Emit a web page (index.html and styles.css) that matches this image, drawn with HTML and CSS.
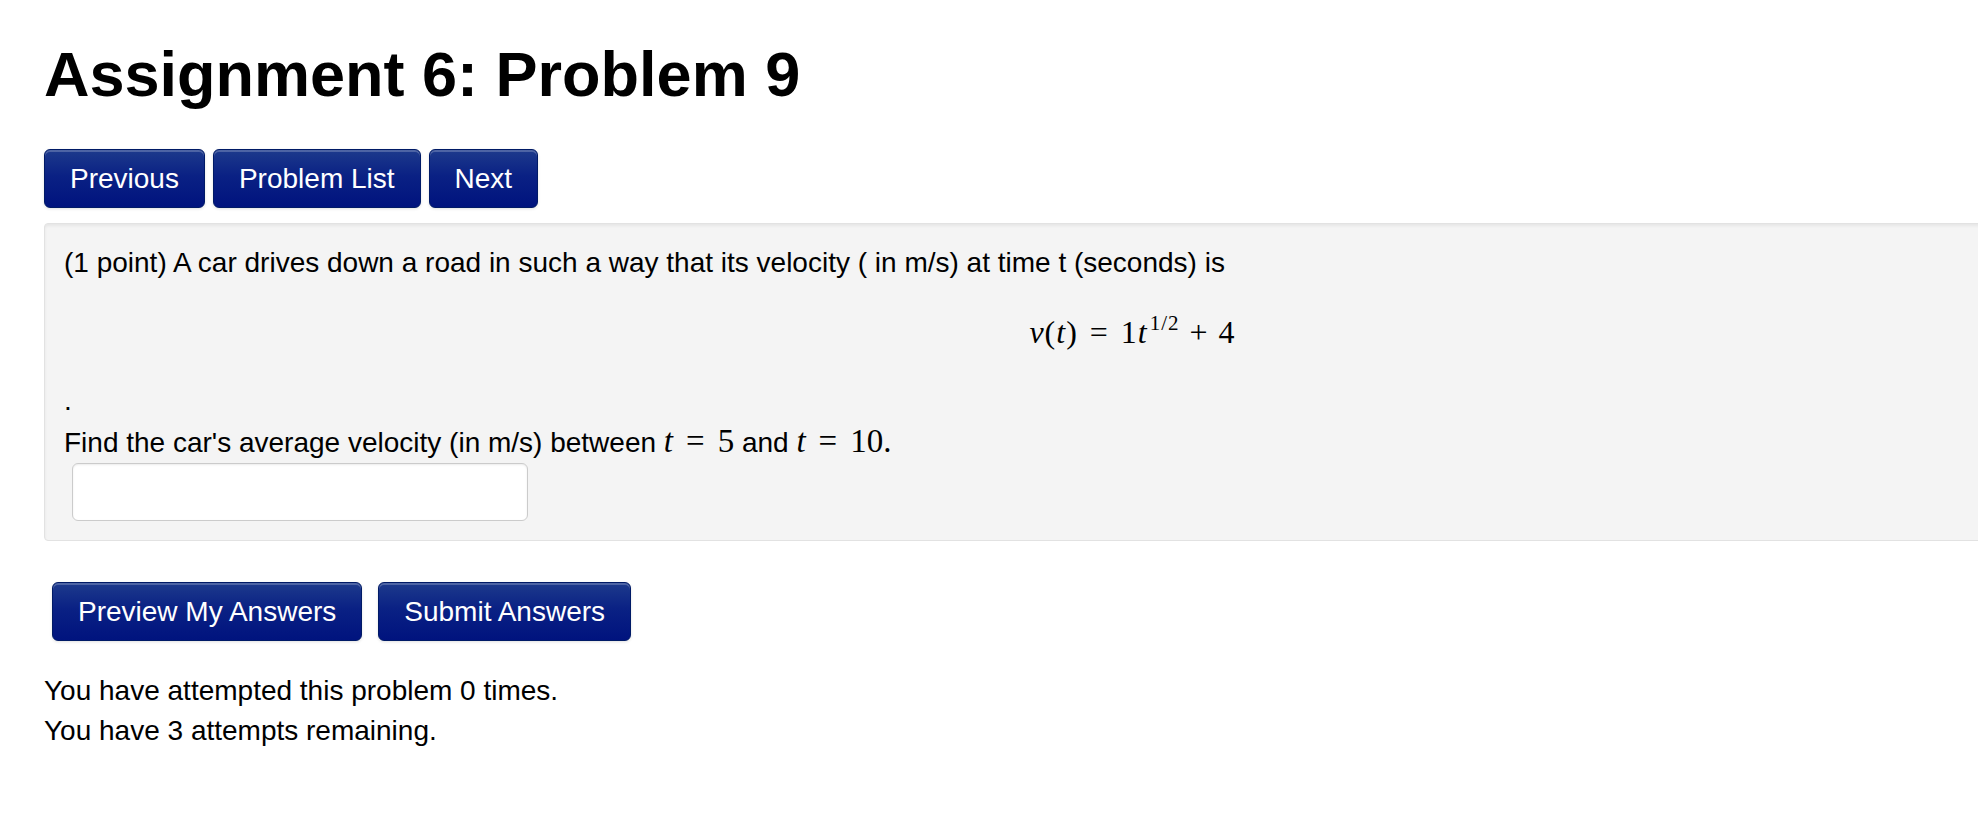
FILE: index.html
```html
<!DOCTYPE html>
<html lang="en">
<head>
<meta charset="utf-8">
<title>Assignment 6: Problem 9</title>
<link rel="stylesheet" href="styles.css">
</head>
<body>
<div class="page">
  <h1 class="title">Assignment 6: Problem 9</h1>
  <div class="nav">
    <button class="btn">Previous</button>
    <button class="btn">Problem List</button>
    <button class="btn">Next</button>
  </div>
  <div class="well">
    <p class="line">(1 point) A car drives down a road in such a way that its velocity ( in m/s) at time t (seconds) is</p>
    <div class="display"><span class="math"><i>v</i><span>(</span><i>t</i><span>)</span><span class="rel">=</span><span>1</span><i>t</i><sup class="sup">1/2</sup><span class="bin">+</span><span>4</span></span></div>
    <p class="line">.</p>
    <p class="line">Find the car's average velocity (in m/s) between <span class="imath"><i>t</i><span class="rel">=</span>5</span> and <span class="imath"><i>t</i><span class="rel">=</span>10.</span></p>
    <input class="answer" type="text" aria-label="answer">
  </div>
  <div class="actions">
    <button class="btn">Preview My Answers</button>
    <button class="btn">Submit Answers</button>
  </div>
  <p class="status">You have attempted this problem 0 times.<br>You have 3 attempts remaining.</p>
</div>
</body>
</html>
```
FILE: styles.css
```css
html, body {
  margin: 0;
  padding: 0;
  overflow: hidden;
  background: #fff;
}
body {
  font-family: "Liberation Sans", Arial, Helvetica, sans-serif;
  font-size: 28px;
  line-height: 40px;
  color: #000;
}
.page {
  padding-left: 44px;
}
.title {
  margin: 38px 0 39px;
  font-size: 63px;
  line-height: 72px;
  font-weight: bold;
}
.nav {
  display: flex;
  gap: 8px;
}
.btn {
  font-family: "Liberation Sans", Arial, Helvetica, sans-serif;
  font-size: 28px;
  line-height: 41px;
  color: #fff;
  padding: 8px 25px;
  border: 1px solid #001a66;
  border-radius: 6px;
  background: linear-gradient(to bottom, #1d3a8c 0%, #0a2184 45%, #00137e 100%);
  box-shadow: inset 0 2px 0 rgba(255, 255, 255, 0.22), 0 1px 3px rgba(0, 0, 0, 0.12);
  cursor: pointer;
}
.well {
  box-sizing: border-box;
  width: 2177px;
  margin-top: 15px;
  padding: 19px;
  background: #f4f4f4;
  border: 1px solid #e2e2e2;
  border-radius: 4px;
  box-shadow: inset 0 2px 3px rgba(0, 0, 0, 0.06);
}
.line {
  margin: 0;
}
.display {
  margin: 28px 0 28px;
  text-align: center;
  height: 42px;
  line-height: 42px;
}
.math {
  font-family: "Liberation Serif", "Times New Roman", serif;
  font-size: 32px;
  letter-spacing: 1px;
}
.math i, .imath i {
  font-style: italic;
}
.rel {
  margin: 0 12px;
}
.bin {
  margin: 0 10px;
}
.sup {
  font-size: 21px;
  vertical-align: 13px;
  line-height: 0;
  margin-left: 2px;
}
.imath {
  font-family: "Liberation Serif", "Times New Roman", serif;
  font-size: 33px;
}
.imath .rel {
  margin: 0 13px;
}
.answer {
  display: block;
  box-sizing: border-box;
  width: 456px;
  height: 58px;
  margin: 0 0 0 8px;
  padding: 6px 10px;
  font-size: 28px;
  background: #fff;
  border: 1px solid #cbcbcb;
  border-radius: 6px;
  box-shadow: inset 0 1px 2px rgba(0, 0, 0, 0.08);
}
.actions {
  display: flex;
  gap: 16px;
  margin: 41px 0 0 8px;
}
.status {
  margin: 30px 0 0;
}
```
